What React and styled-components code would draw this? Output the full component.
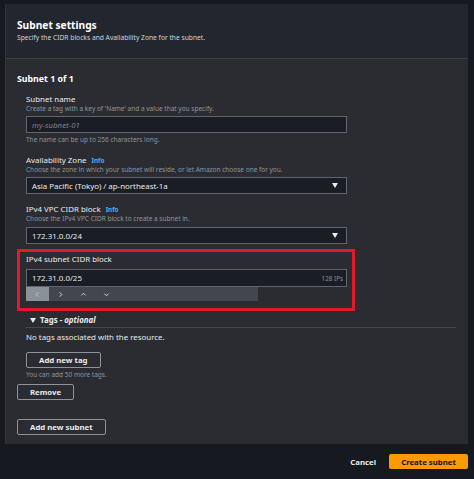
import React from "react";
import styled, { createGlobalStyle } from "styled-components";

const Global = createGlobalStyle`
  html, body { margin: 0; padding: 0; background: #16191f; }
  body { font-family: "Noto Sans", "Open Sans", Arial, sans-serif; color: #e9ebed; }
  * { box-sizing: border-box; }
`;

const Page = styled.div`
  width: 474px;
  height: 479px;
  padding: 4px 6px 0 5px;
  display: flex;
  flex-direction: column;
  overflow: hidden;
`;

const Card = styled.section`
  display: flex;
  flex-direction: column;
  background: #2a2c31;
  border-left: 1px solid #30343b;
`;

const Header = styled.header`
  height: 55px;
  background: #22262e;
  border-bottom: 1px solid #3a3f47;
  padding: 14px 0 0 11px;
`;

const Title = styled.h2`
  margin: 0;
  font-size: 10.2px;
  line-height: 14px;
  font-weight: 700;
  color: #ffffff;
`;

const Desc = styled.p`
  margin: 1px 0 0;
  font-size: 6.7px;
  line-height: 10px;
  color: #d1d5db;
`;

const Body = styled.div`
  padding: 14px 12px 9px 11px;
  display: flex;
  flex-direction: column;
`;

const SectionTitle = styled.h3`
  margin: 0;
  font-size: 8.8px;
  line-height: 12px;
  font-weight: 700;
  color: #ffffff;
`;

const Fields = styled.div`
  margin-left: 9px;
  width: 321px;
  display: flex;
  flex-direction: column;
`;

const Field = styled.div`
  display: flex;
  flex-direction: column;
  margin-top: ${(p) => p.$mt || 0}px;
`;

const Label = styled.div`
  height: 10px;
  font-size: 7.9px;
  line-height: 10px;
  color: #e9ebed;
  display: flex;
  align-items: baseline;
  gap: 5px;
`;

const Info = styled.span`
  font-size: 6.3px;
  line-height: 10px;
  font-weight: 700;
  color: #42b4e6;
`;

const Hint = styled.div`
  font-size: 6.5px;
  line-height: 10px;
  color: #8d949e;
  margin-top: ${(p) => p.$mt || 0}px;
`;

const InputBox = styled.div`
  height: ${(p) => p.$h || 17}px;
  margin-top: ${(p) => p.$mt || 2}px;
  background: #1a1d24;
  border: 1px solid #5f6671;
  display: flex;
  align-items: center;
  justify-content: space-between;
  padding: 0 8px 0 5px;
  font-size: 7.9px;
  color: ${(p) => (p.$placeholder ? "#7d848f" : "#e9ebed")};
  font-style: ${(p) => (p.$placeholder ? "italic" : "normal")};
`;

const Arrow = styled.span`
  width: 0;
  height: 0;
  border-left: 3.5px solid transparent;
  border-right: 3.5px solid transparent;
  border-top: 5px solid #e9ebed;
`;

const Suffix = styled.span`
  font-size: 6.3px;
  color: #8d949e;
  margin-right: -5px;
`;

const Highlight = styled.div`
  margin: 5px 0 0 -9px;
  width: 338px;
  border: 3px solid #e2192c;
  padding: 2px 5px 7px 6px;
  display: flex;
  flex-direction: column;
`;

const NavBar = styled.div`
  width: 232px;
  height: 14px;
  background: #41464f;
  display: flex;
`;

const NavButton = styled.span`
  width: 23px;
  height: 14px;
  display: flex;
  align-items: center;
  justify-content: center;
  background: ${(p) => (p.$active ? "#8b9199" : "transparent")};
  color: ${(p) => (p.$active ? "#c3c8ce" : "#d5d9de")};
`;

const TagsHeader = styled.div`
  margin: 4px 0 0 4px;
  height: 10px;
  display: flex;
  align-items: center;
  gap: 4px;
  font-size: 7.9px;
  line-height: 10px;
  font-weight: 700;
  color: #e9ebed;
  em { font-style: italic; }
`;

const Caret = styled.span`
  width: 0;
  height: 0;
  border-left: 3px solid transparent;
  border-right: 3px solid transparent;
  border-top: 5px solid #e9ebed;
`;

const Divider = styled.div`
  margin: 2px 0 0 9px;
  width: 430px;
  height: 1px;
  background: #434851;
`;

const Text = styled.div`
  margin-top: 4px;
  font-size: 7.9px;
  line-height: 10px;
  color: #e9ebed;
`;

const Button = styled.button`
  align-self: flex-start;
  height: 16px;
  margin-top: ${(p) => p.$mt || 0}px;
  padding: 0 ${(p) => p.$px || 12}px;
  background: transparent;
  border: 1px solid #8d949e;
  border-radius: 2px;
  font-family: inherit;
  font-size: 7.8px;
  font-weight: 700;
  color: #e9ebed;
  line-height: 14px;
`;

const Footer = styled.footer`
  display: flex;
  justify-content: flex-end;
  align-items: center;
  gap: 13px;
  margin-top: 10px;
`;

const LinkButton = styled.span`
  font-size: 7.8px;
  font-weight: 700;
  color: #e9ebed;
`;

const Primary = styled.button`
  width: 79px;
  height: 15px;
  border: none;
  border-radius: 2px;
  background: #ff9900;
  font-family: inherit;
  font-size: 7.8px;
  font-weight: 700;
  color: #0f141a;
`;

const Chevron = ({ d }) => (
  <svg width="7" height="7" viewBox="0 0 8 8" fill="none" stroke="currentColor" strokeWidth="1.1">
    <path d={d} />
  </svg>
);

export default function App() {
  return (
    <>
      <Global />
      <Page>
        <Card>
          <Header>
            <Title>Subnet settings</Title>
            <Desc>Specify the CIDR blocks and Availability Zone for the subnet.</Desc>
          </Header>
          <Body>
            <SectionTitle>Subnet 1 of 1</SectionTitle>
            <Fields>
              <Field $mt={9}>
                <Label>Subnet name</Label>
                <Hint>Create a tag with a key of 'Name' and a value that you specify.</Hint>
                <InputBox $placeholder>my-subnet-01</InputBox>
                <Hint $mt={2}>The name can be up to 256 characters long.</Hint>
              </Field>
              <Field $mt={10}>
                <Label>
                  Availability Zone <Info>Info</Info>
                </Label>
                <Hint>Choose the zone in which your subnet will reside, or let Amazon choose one for you.</Hint>
                <InputBox>
                  Asia Pacific (Tokyo) / ap-northeast-1a
                  <Arrow />
                </InputBox>
              </Field>
              <Field $mt={10}>
                <Label>
                  IPv4 VPC CIDR block <Info>Info</Info>
                </Label>
                <Hint>Choose the IPv4 VPC CIDR block to create a subnet in.</Hint>
                <InputBox $mt={3}>
                  172.31.0.0/24
                  <Arrow />
                </InputBox>
              </Field>
              <Highlight>
                <Label>IPv4 subnet CIDR block</Label>
                <InputBox $h={18} $mt={5}>
                  172.31.0.0/25
                  <Suffix>128 IPs</Suffix>
                </InputBox>
                <NavBar>
                  <NavButton $active>
                    <Chevron d="M5 1.5 L2.5 4 L5 6.5" />
                  </NavButton>
                  <NavButton>
                    <Chevron d="M3 1.5 L5.5 4 L3 6.5" />
                  </NavButton>
                  <NavButton>
                    <Chevron d="M1.5 5 L4 2.5 L6.5 5" />
                  </NavButton>
                  <NavButton>
                    <Chevron d="M1.5 3 L4 5.5 L6.5 3" />
                  </NavButton>
                </NavBar>
              </Highlight>
              <TagsHeader>
                <Caret />
                <span>
                  Tags - <em>optional</em>
                </span>
              </TagsHeader>
            </Fields>
            <Divider />
            <Fields>
              <Text>No tags associated with the resource.</Text>
              <Button $mt={10}>Add new tag</Button>
              <Hint $mt={2}>You can add 50 more tags.</Hint>
            </Fields>
            <Button $mt={4}>Remove</Button>
            <Button $mt={19}>Add new subnet</Button>
          </Body>
        </Card>
        <Footer>
          <LinkButton>Cancel</LinkButton>
          <Primary>Create subnet</Primary>
        </Footer>
      </Page>
    </>
  );
}
